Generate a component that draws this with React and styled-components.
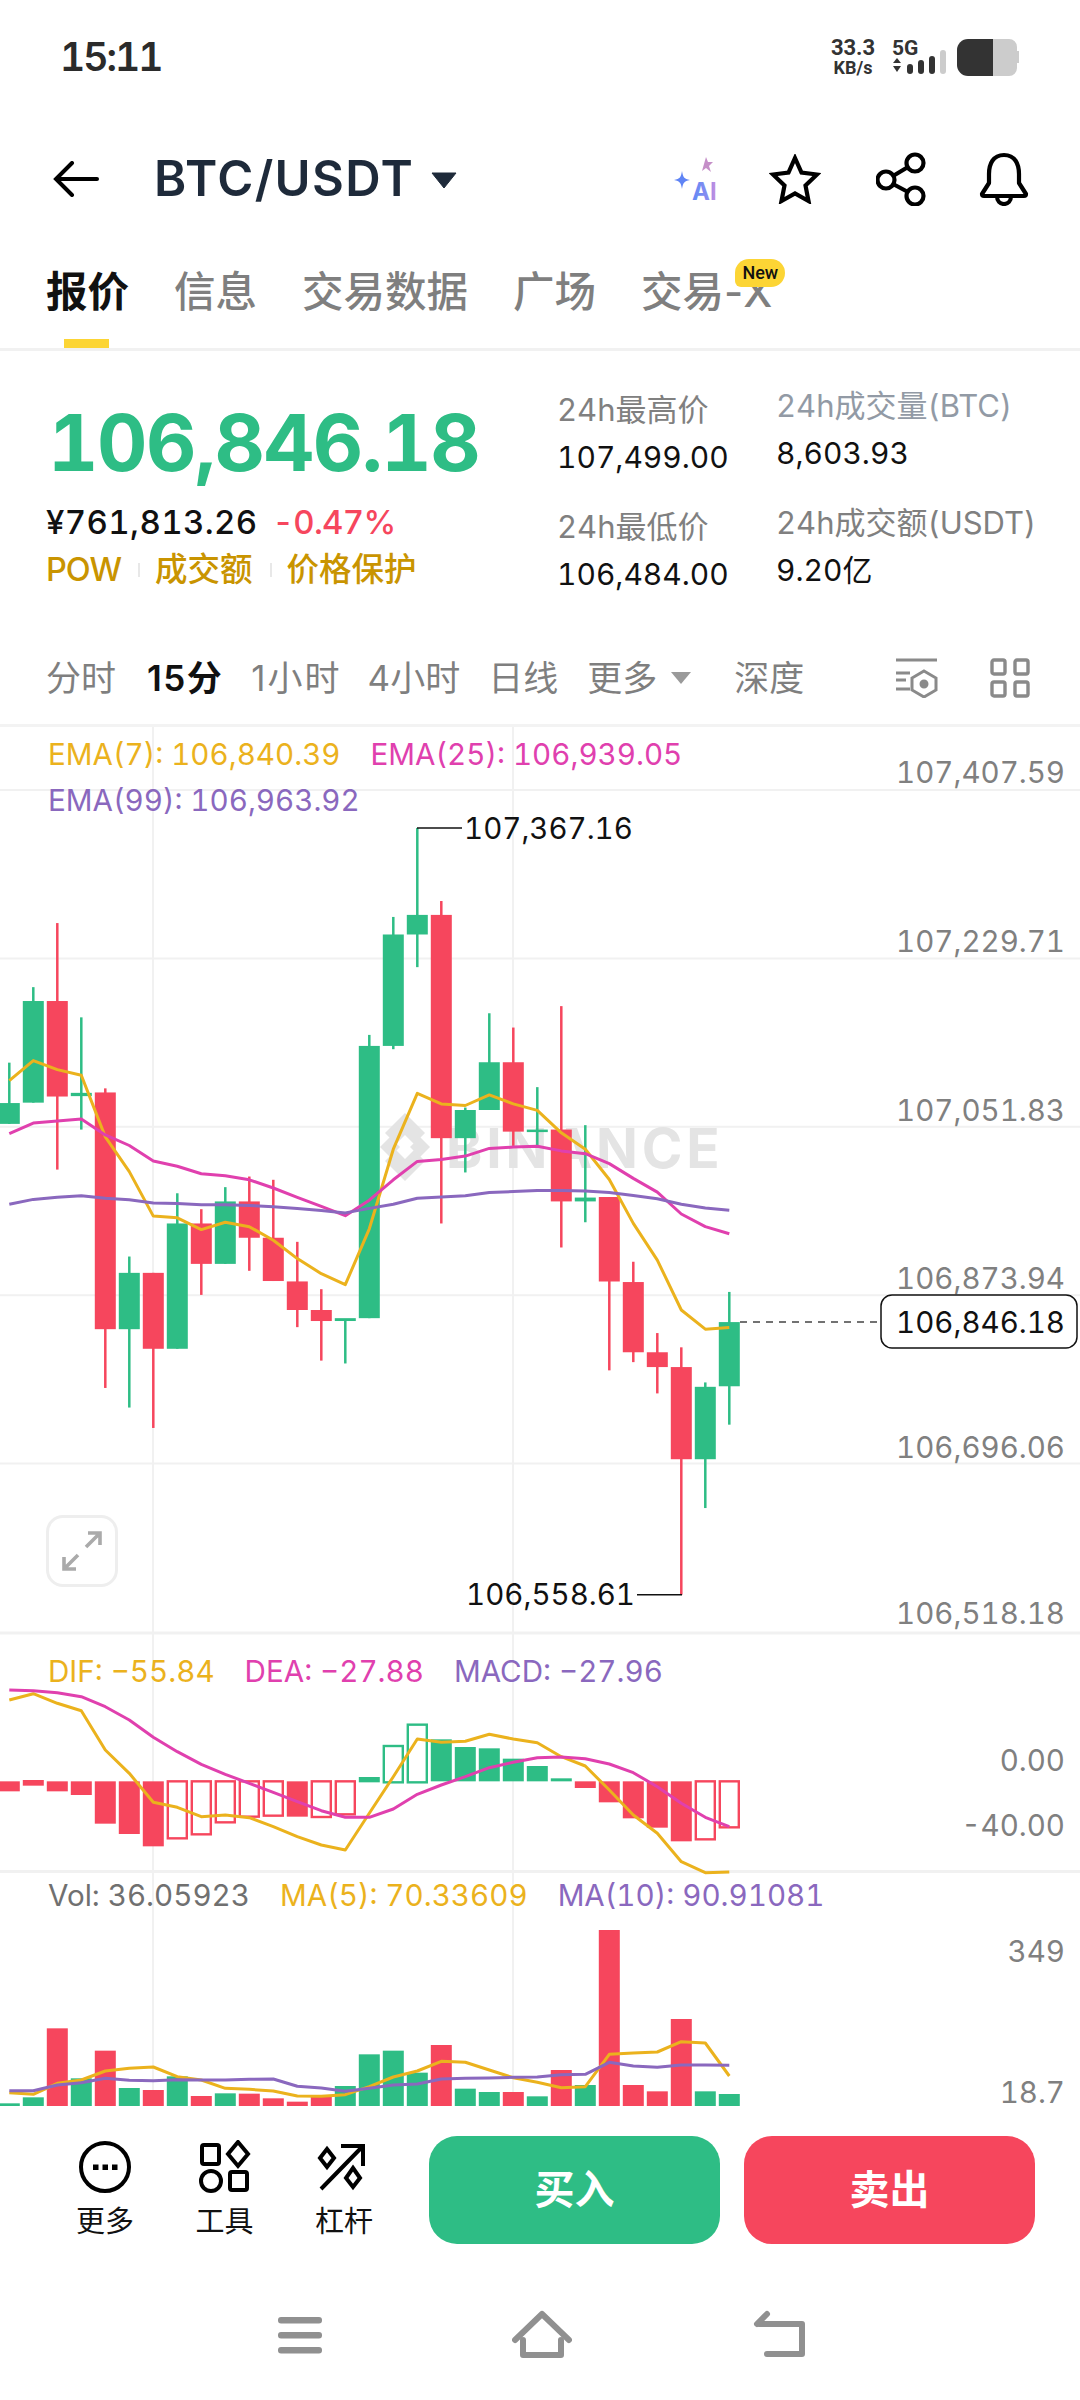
import React from "react";
import styled, { createGlobalStyle } from "styled-components";

const GREEN = "#2EBD85";
const RED = "#F6465D";
const YELLOW = "#EBB21D";
const PINK = "#E040AE";
const PURPLE = "#8A68BE";
const FONT = `Inter, "Noto Sans CJK SC", sans-serif`;

const Global = createGlobalStyle`
  html, body { margin: 0; padding: 0; background: #fff; }
  body { font-family: ${FONT}; }
`;

const Page = styled.div`
  width: 1080px;
  height: 2400px;
  display: flex;
  flex-direction: column;
  background: #fff;
  overflow: hidden;
`;

/* status bar */
const StatusBar = styled.div`
  height: 114px;
  flex: none;
  display: flex;
  justify-content: space-between;
  padding: 37px 61px 0 60px;
  box-sizing: border-box;
`;
const Clock = styled.div`
  font: 600 39px/40px ${FONT};
  font-variant-numeric: tabular-nums;
  color: #2b2b2b;
  letter-spacing: -2px;
`;
const StatusRight = styled.div`
  display: flex;
  align-items: flex-start;
  height: 40px;
`;
const NetSpeed = styled.div`
  font: 700 22px/20px Roboto, sans-serif;
  color: #333;
  width: 60px;
  text-align: center;
  margin-top: 1px;
  small { display: block; font: 700 18px/20px Roboto, sans-serif; }
`;
const NetType = styled.div`
  position: relative;
  width: 66px;
  margin-left: 8px;
  font: 700 21px/20px Roboto, sans-serif;
  color: #333;
  margin-top: 1px;
  padding-left: 1px;
  box-sizing: border-box;
`;
const SignalBars = styled.svg`
  position: absolute;
  left: 0;
  top: 0;
`;

/* header */
const Header = styled.div`
  height: 122px;
  flex: none;
  display: flex;
  align-items: center;
  padding: 8px 50px 0 53px;
  box-sizing: border-box;
`;
const Pair = styled.div`
  font: 600 49px/60px ${FONT};
  color: #1e2a3a;
  margin-left: 55px;
  letter-spacing: 1.4px;
`;
const PairCaret = styled.svg`
  margin-left: 17px;
  margin-top: 2px;
`;
const HeaderIcons = styled.div`
  margin-left: auto;
  display: flex;
  align-items: center;
  gap: 50px;
`;

/* tabs */
const Tabs = styled.div`
  height: 115px;
  flex: none;
  display: flex;
  gap: 45px;
  padding-left: 46px;
  box-sizing: border-box;
  border-bottom: 3px solid #f1f1f1;
`;
const Tab = styled.div`
  position: relative;
  margin-top: 32px;
  font: ${(p) => (p.$on ? 700 : 500)} 41.5px/48px ${FONT};
  color: ${(p) => (p.$on ? "#111" : "#7f7f7f")};
  height: 80px;
  &::after {
    content: "";
    display: ${(p) => (p.$on ? "block" : "none")};
    position: absolute;
    left: 18px;
    width: 45px;
    height: 9px;
    bottom: 0;
    background: #fcd535;
  }
`;
const NewBadge = styled.span`
  position: absolute;
  right: -13px;
  top: -9px;
  width: 50px;
  height: 28px;
  border-radius: 14px 14px 14px 6px;
  background: #fcd535;
  color: #111;
  font: 500 18px/28px Roboto, sans-serif;
  text-align: center;
`;

/* summary */
const Summary = styled.div`
  height: 261px;
  flex: none;
  display: flex;
  padding-left: 46px;
  box-sizing: border-box;
`;
const PriceCol = styled.div`
  width: 511px;
  flex: none;
`;
const BigPrice = styled.div`
  margin: 46px 0 0 2px;
  font: 700 78px/92px ${FONT};
  font-variant-numeric: tabular-nums;
  letter-spacing: -1.4px;
  color: ${GREEN};
`;
const SubRow = styled.div`
  display: flex;
  align-items: baseline;
  gap: 15px;
  margin-top: 13px;
  font: 500 33px/40px ${FONT};
  font-variant-numeric: tabular-nums;
  color: #111;
`;
const Cny = styled.span`
  letter-spacing: 0.4px;
`;
const Change = styled.span`
  color: ${RED};
  letter-spacing: -0.7px;
`;
const TagRow = styled.div`
  display: flex;
  align-items: center;
  margin-top: 8px;
`;
const TagItem = styled.span`
  font: 500 32.5px/40px ${FONT};
  letter-spacing: ${(p) => p.$ls || 0}px;
  color: #c99400;
  & + & {
    margin-left: 17px;
    padding-left: 17px;
    background: linear-gradient(#e8e8e8, #e8e8e8) left center / 2px 14px no-repeat;
  }
`;
const StatCol = styled.div`
  flex: none;
  width: ${(p) => p.$w}px;
  padding-top: ${(p) => p.$top}px;
`;
const StatLabel = styled.div`
  font: 400 31px/36px ${FONT};
  font-variant-numeric: tabular-nums;
  color: ${(p) => p.$c || "#808080"};
`;
const StatValue = styled.div`
  font: 400 30px/38px ${FONT};
  font-variant-numeric: tabular-nums;
  color: #111;
  margin-top: 10px;
  margin-bottom: 33px;
`;

/* intervals */
const Intervals = styled.div`
  height: 115px;
  flex: none;
  display: flex;
  align-items: center;
  padding: 20px 50px 0 46px;
  box-sizing: border-box;
  border-bottom: 3px solid #f3f3f3;
  position: relative;
`;
const Interval = styled.span`
  font: ${(p) => (p.$on ? 600 : 400)} 35px/44px ${FONT};
  letter-spacing: ${(p) => p.$ls || 0}px;
  color: ${(p) => (p.$on ? "#111" : "#7f7f7f")};
  margin-right: ${(p) => p.$gap}px;
`;
const IntervalCaret = styled.svg`
  margin-right: 42px;
`;
const IntervalIcons = styled.div`
  margin-left: auto;
  display: flex;
  gap: 52px;
`;

/* chart */
const Panel = styled.div`
  position: relative;
  flex: none;
  height: ${(p) => p.$h}px;
`;
const ChartSvg = styled.svg`
  display: block;
  position: absolute;
  inset: 0;
  overflow: visible;
`;
const Axis = styled.text`
  font: 400 29.5px ${FONT};
  font-variant-numeric: tabular-nums;
  fill: #808080;
  text-anchor: end;
`;
const Extreme = styled.text`
  font: 400 29.5px ${FONT};
  font-variant-numeric: tabular-nums;
  fill: #111;
  text-anchor: ${(p) => p.$anchor || "start"};
`;
const Watermark = styled.text`
  font: 700 55px ${FONT};
  fill: #e4e4e4;
  letter-spacing: 3.8px;
`;
const Legend = styled.div`
  position: absolute;
  left: ${(p) => p.$left || 48}px;
  top: ${(p) => p.$top}px;
  width: ${(p) => p.$w || 700}px;
  display: flex;
  flex-wrap: wrap;
  column-gap: 30px;
  row-gap: 10px;
  font: 400 29.6px/36px ${FONT};
  font-variant-numeric: tabular-nums;
  white-space: nowrap;
`;
const LegendItem = styled.span`
  color: ${(p) => p.$c};
`;
const ExpandBtn = styled.div`
  position: absolute;
  left: 46px;
  top: 788px;
  width: 72px;
  height: 72px;
  box-sizing: border-box;
  border: 3px solid #eeeeee;
  border-radius: 17px;
  display: flex;
  align-items: center;
  justify-content: center;
  background: #fff;
`;

/* footer */
const Footer = styled.div`
  height: 164px;
  flex: none;
  display: flex;
  align-items: flex-start;
  padding-top: 30px;
  box-sizing: border-box;
`;
const Tools = styled.div`
  width: 429px;
  flex: none;
  display: flex;
  padding: 4px 0 0 66px;
  box-sizing: border-box;
`;
const Tool = styled.div`
  width: 119.5px;
  display: flex;
  flex-direction: column;
  align-items: flex-start;
`;
const ToolIcon = styled.svg`
  display: block;
  margin-left: ${(p) => p.$ml || 0}px;
`;
const ToolText = styled.span`
  font: 400 29px/34px ${FONT};
  color: #111;
  margin: 11px 0 0 10px;
`;
const TradeBtn = styled.div`
  width: 291px;
  height: 108px;
  flex: none;
  border-radius: 28px;
  background: ${(p) => p.$c};
  color: #fff;
  font: 700 40px/108px ${FONT};
  text-align: center;
  margin-right: ${(p) => p.$mr || 0}px;
`;

/* nav */
const NavBar = styled.div`
  flex: 1;
  display: flex;
  align-items: flex-start;
  padding: 40px 0 0 272px;
  gap: 184px;
`;

/* ---- data ---- */
const cx = (i) => 9.3 + 24 * i;
const y3 = (v) => 790 + v / 2.45;
const y5 = (v) => 790 + v / 1.823;

const candles3 = [
  ["g", 767, 818, 668, 818],
  ["g", 517, 766, 483, 766],
  ["r", 517, 751, 326, 930],
  ["g", 742, 750, 557, 832],
  ["r", 741, 1321, 731, 1465],
  ["g", 1183, 1321, 1143, 1513],
  ["r", 1183, 1369, 1183, 1563],
  ["g", 1062, 1369, 988, 1369],
  ["r", 1062, 1161, 1027, 1237],
  ["g", 1008, 1161, 973, 1161],
  ["r", 1008, 1097, 947, 1178],
  ["r", 1097, 1203, 955, 1203],
  ["r", 1204, 1274, 1107, 1316],
  ["r", 1274, 1301, 1223, 1398],
  ["g", 1294, 1301, 1297, 1405],
  ["g", 627, 1294, 600, 1294],
  ["g", 354, 627, 311, 635],
  ["g", 306, 354, 93, 434],
  ["r", 306, 853, 272, 1062],
  ["g", 784, 853, 778, 937],
  ["g", 667, 784, 547, 784],
  ["r", 667, 837, 582, 872],
  ["g", 832, 836, 728, 872],
].map(([c, a, b, d, e]) => [c, y3(a), y3(b), y3(d), y3(e)]);
const candles5 = [
  ["r", 619, 750, 394, 834],
  ["g", 743, 750, 611, 788],
  ["r", 742, 896, 742, 1058],
  ["r", 897, 1025, 860, 1043],
  ["r", 1025, 1052, 990, 1100],
  ["r", 1052, 1220, 1016, 1467],
  ["g", 1088, 1220, 1080, 1309],
  ["g", 970, 1087, 915, 1157],
].map(([c, a, b, d, e]) => [c, y5(a), y5(b), y5(d), y5(e)]);
const candles = [...candles3, ...candles5];

const mix = (a3, a5) => [...a3.map(y3), ...a5.map(y5)];
const ema7 = mix(
  [712, 663, 685, 699, 850, 935, 1044, 1048, 1077, 1059, 1070, 1103, 1148, 1185, 1212, 1075, 880, 743, 769, 773, 747, 769, 785],
  [625, 655, 710, 790, 857, 948, 983, 980]
);
const ema25 = mix(
  [842, 816, 811, 806, 845, 871, 909, 922, 940, 945, 955, 975, 998, 1020, 1043, 1005, 955, 910, 905, 897, 878, 875, 873],
  [658, 663, 681, 708, 733, 773, 796, 809]
);
const ema99 = mix(
  [1015, 1003, 998, 994, 1000, 1004, 1012, 1013, 1016, 1016, 1018, 1021, 1025, 1030, 1036, 1025, 1015, 1000, 997, 994, 986, 984, 981],
  [730, 731, 734, 739, 745, 755, 762, 766]
);

const pts = (arr, f = (v) => v) => arr.map((v, i) => `${cx(i).toFixed(1)},${f(v).toFixed(1)}`).join(" ");

const macdBars = [
  ["r", 0, 484, 514], ["r", 0, 480, 497], ["r", 0, 484, 514], ["r", 0, 484, 525], ["r", 0, 484, 611],
  ["r", 0, 484, 642], ["r", 0, 484, 679], ["r", 1, 484, 655], ["r", 1, 484, 643], ["r", 1, 484, 607],
  ["r", 1, 484, 590], ["r", 1, 484, 587], ["r", 0, 484, 590], ["r", 1, 484, 591], ["r", 1, 484, 583],
  ["g", 0, 471, 487], ["g", 1, 378, 487], ["g", 1, 314, 487], ["g", 0, 358, 484], ["g", 0, 381, 484],
  ["g", 0, 385, 484], ["g", 0, 416, 484], ["g", 0, 438, 484], ["g", 0, 475, 484], ["r", 0, 484, 504],
  ["r", 0, 484, 547], ["r", 0, 484, 595], ["r", 0, 484, 623], ["r", 0, 484, 664], ["r", 1, 484, 658],
  ["r", 1, 484, 622],
];
const yM = (v) => 1620 + v / 3;
const dif = [240, 221, 250, 272, 390, 460, 547, 562, 590, 585, 593, 620, 650, 675, 690, 580, 470, 357, 367, 364, 343, 357, 368, 410, 438, 510, 585, 640, 725, 758, 756];
const dea = [210, 212, 218, 230, 260, 300, 352, 395, 433, 463, 490, 517, 545, 572, 592, 592, 567, 523, 495, 470, 443, 427, 413, 411, 416, 432, 458, 500, 550, 592, 620];

const yV = (v) => 1870 + v / 3;
const volBars = [
  ["g", 700], ["g", 682], ["r", 475], ["g", 625], ["r", 542], ["g", 654], ["r", 660], ["g", 619],
  ["r", 678], ["g", 670], ["r", 671], ["r", 685], ["r", 695], ["r", 680], ["g", 648], ["g", 553],
  ["g", 542], ["g", 608], ["r", 525], ["g", 656], ["g", 666], ["r", 666], ["g", 679], ["r", 600],
  ["g", 645], ["r", 180], ["r", 645], ["r", 664], ["r", 447], ["g", 664], ["g", 672],
];
const ma5 = [668, 673, 640, 630, 603, 595, 591, 620, 630, 655, 658, 663, 678, 679, 674, 650, 621, 603, 574, 577, 600, 623, 637, 653, 650, 553, 549, 546, 515, 519, 618];
const ma10 = [662, 662, 645, 638, 625, 631, 632, 629, 630, 630, 628, 627, 649, 654, 664, 655, 645, 642, 627, 625, 624, 622, 621, 614, 613, 577, 588, 592, 585, 585, 586];

const col = (c) => (c === "g" ? GREEN : RED);

const Line = ({ data, f, color, w = 3 }) => (
  <polyline points={pts(data, f)} fill="none" stroke={color} strokeWidth={w} strokeLinejoin="round" />
);

const VGrid = ({ top, bottom }) => (
  <>
    <line x1="153" x2="153" y1={top} y2={bottom} stroke="#f1f1f1" strokeWidth="2" />
    <line x1="513" x2="513" y1={top} y2={bottom} stroke="#f1f1f1" strokeWidth="2" />
  </>
);

const PriceChart = () => (
  <Panel $h={905}>
    <ChartSvg width="1080" height="905" viewBox="0 727 1080 905">
      <VGrid top={727} bottom={1632} />
      {[790, 958.4, 1126.8, 1295.2, 1463.6].map((y) => (
        <line key={y} x1="0" x2="1080" y1={y} y2={y} stroke="#f1f1f1" strokeWidth="2" />
      ))}
      <g fill="#e4e4e4">
        <polygon points="405,1113 425,1133 414,1144 405,1135 396,1144 385,1133" />
        <polygon points="380,1147 390,1137 400,1147 390,1157" />
        <polygon points="410,1147 420,1137 430,1147 420,1157" />
        <polygon points="405,1181 385,1161 396,1150 405,1159 414,1150 425,1161" />
      </g>
      <Watermark x="446" y="1168">BINANCE</Watermark>
      {candles.map(([c, a, b, d, e], i) => (
        <g key={i} fill={col(c)}>
          <rect x={cx(i) - 1.25} y={d} width="2.5" height={e - d} />
          <rect x={cx(i) - 10.5} y={a} width="21" height={Math.max(b - a, 2.5)} />
        </g>
      ))}
      <Line data={ema7} color={YELLOW} />
      <Line data={ema25} color={PINK} />
      <Line data={ema99} color={PURPLE} />
      <path d="M417 828H462" stroke="#111" strokeWidth="1.5" />
      <path d="M637 1594.7H682" stroke="#111" strokeWidth="1.5" />
      <path d="M740 1322H880" stroke="#444" strokeWidth="1.5" strokeDasharray="7 6" />
      <Extreme x="464" y="839">107,367.16</Extreme>
      <Extreme x="635" y="1605" $anchor="end">106,558.61</Extreme>
      <Axis x="1065" y="783">107,407.59</Axis>
      <Axis x="1065" y="952">107,229.71</Axis>
      <Axis x="1065" y="1121">107,051.83</Axis>
      <Axis x="1065" y="1289">106,873.94</Axis>
      <Axis x="1065" y="1458">106,696.06</Axis>
      <Axis x="1065" y="1624">106,518.18</Axis>
      <rect x="881" y="1295" width="196" height="53" rx="11" fill="#fff" stroke="#111" strokeWidth="1.5" />
      <Extreme x="1065" y="1333" $anchor="end">106,846.18</Extreme>
    </ChartSvg>
    <Legend $top={9}>
      <LegendItem $c={YELLOW}>EMA(7): 106,840.39</LegendItem>
      <LegendItem $c={PINK}>EMA(25): 106,939.05</LegendItem>
      <LegendItem $c={PURPLE}>EMA(99): 106,963.92</LegendItem>
    </Legend>
    <ExpandBtn>
      <svg width="46" height="46" viewBox="0 0 46 46" fill="none" stroke="#aaa" strokeWidth="3.6">
        <path d="M27 19L41 5M29 5H41V17" />
        <path d="M19 27L5 41M17 41H5V29" />
      </svg>
    </ExpandBtn>
  </Panel>
);

const MacdChart = () => (
  <Panel $h={240}>
    <ChartSvg width="1080" height="240" viewBox="0 1632 1080 240">
      <VGrid top={1632} bottom={1872} />
      <path d="M0 1633H1080M0 1871.5H1080" stroke="#f1f1f1" strokeWidth="3" />
      {macdBars.map(([c, hollow, a, b], i) =>
        hollow ? (
          <rect key={i} x={cx(i) - 9.5} y={yM(a)} width="19" height={yM(b) - yM(a)} fill="none" stroke={col(c)} strokeWidth="2.4" />
        ) : (
          <rect key={i} x={cx(i) - 10.5} y={yM(a)} width="21" height={yM(b) - yM(a)} fill={col(c)} />
        )
      )}
      <Line data={dif} f={yM} color={YELLOW} />
      <Line data={dea} f={yM} color={PINK} />
      <Axis x="1065" y="1771">0.00</Axis>
      <Axis x="1065" y="1836">-40.00</Axis>
    </ChartSvg>
    <Legend $top={21} $left={48} $w={900}>
      <LegendItem $c={YELLOW}>DIF: −55.84</LegendItem>
      <LegendItem $c={PINK}>DEA: −27.88</LegendItem>
      <LegendItem $c={PURPLE}>MACD: −27.96</LegendItem>
    </Legend>
  </Panel>
);

const VolChart = () => (
  <Panel $h={234}>
    <ChartSvg width="1080" height="234" viewBox="0 1872 1080 234">
      <VGrid top={1872} bottom={2106} />
      {volBars.map(([c, t], i) => (
        <rect key={i} x={cx(i) - 10.5} y={yV(t)} width="21" height={2106 - yV(t)} fill={col(c)} />
      ))}
      <Line data={ma5} f={yV} color={YELLOW} />
      <Line data={ma10} f={yV} color={PURPLE} />
      <Axis x="1065" y="1962">349</Axis>
      <Axis x="1065" y="2103">18.7</Axis>
    </ChartSvg>
    <Legend $top={5} $left={48} $w={900}>
      <LegendItem $c="#707070">Vol: 36.05923</LegendItem>
      <LegendItem $c={YELLOW}>MA(5): 70.33609</LegendItem>
      <LegendItem $c={PURPLE}>MA(10): 90.91081</LegendItem>
    </Legend>
  </Panel>
);

const IconPlain = ({ children, w, h }) => (
  <svg width={w} height={h} viewBox={`0 0 ${w} ${h}`} fill="none" stroke="#000" strokeWidth="4.2">
    {children}
  </svg>
);

export default function App() {
  return (
    <Page>
      <Global />
      <StatusBar>
        <Clock>15:11</Clock>
        <StatusRight>
          <NetSpeed>
            33.3
            <small>KB/s</small>
          </NetSpeed>
          <NetType>
            5G
            <SignalBars width="58" height="38" viewBox="0 0 58 38" fill="#333">
              <polygon points="2,25 6,20 10,25" />
              <polygon points="2,28 10,28 6,34" />
              <rect x="16" y="26" width="6" height="10" rx="3" />
              <rect x="27" y="22" width="6" height="14" rx="3" />
              <rect x="38" y="18" width="6" height="18" rx="3" />
              <rect x="49" y="12" width="6" height="24" rx="3" fill="#ccc" />
            </SignalBars>
          </NetType>
          <svg width="62" height="37" viewBox="0 0 62 37" style={{ marginTop: 2 }}>
            <path d="M11 0H36V37H11A11 11 0 0 1 0 26V11A11 11 0 0 1 11 0Z" fill="#333" />
            <path d="M36 0H52A8 8 0 0 1 60 8V12H62V24H60V29A8 8 0 0 1 52 37H36Z" fill="#ccc" />
          </svg>
        </StatusRight>
      </StatusBar>

      <Header>
        <svg width="46" height="36" viewBox="0 0 46 36" fill="none" stroke="#000" strokeWidth="4" strokeLinecap="round">
          <path d="M44 18H4" />
          <path d="M19 2L3 18L19 34" />
        </svg>
        <Pair>BTC/USDT</Pair>
        <PairCaret width="26" height="17" viewBox="0 0 26 17">
          <path d="M1 1H25L13 16Z" fill="#1e2a3a" stroke="#1e2a3a" strokeLinejoin="round" />
        </PairCaret>
        <HeaderIcons>
          <svg width="46" height="54" viewBox="0 0 46 54" style={{ marginTop: 8, overflow: "visible" }}>
            <defs>
              <linearGradient id="aiG" x1="0" x2="1" y1="0" y2="0">
                <stop offset="0" stopColor="#5f8af5" />
                <stop offset="0.7" stopColor="#8d8cf0" />
                <stop offset="1" stopColor="#d48fd8" />
              </linearGradient>
            </defs>
            <path d="M9 15 C10 21 11 23 17 24 C11 25 10 27 9 33 C8 27 7 25 1 24 C7 23 8 21 9 15Z" fill="#5f84f5" />
            <path d="M33 1L35 6L40 6L36 10L38 16L33 12L29 15Z" fill="#c58fc8" />
            <text x="19" y="44" fontFamily="Inter" fontWeight="700" fontSize="24" fill="url(#aiG)">AI</text>
          </svg>
          <svg width="52" height="50" viewBox="0 0 52 50" style={{ marginRight: 5 }}>
            <path d="M26 4L32.5 18.5L48 20.5L36.5 31.5L39.5 47L26 39.5L12.5 47L15.5 31.5L4 20.5L19.5 18.5Z" fill="none" stroke="#000" strokeWidth="4.2" strokeLinejoin="miter" />
          </svg>
          <IconPlain w={52} h={54}>
            <circle cx="39" cy="11" r="8.5" />
            <circle cx="10" cy="28" r="8.5" />
            <circle cx="39" cy="44" r="8.5" />
            <path d="M32 15L17 24M17 32L32 40" />
          </IconPlain>
          <IconPlain w={52} h={54}>
            <path d="M26 3C15 3 11 12 11 22V31L4 42C4 44 5 44 6 44H46C47 44 48 44 48 42L41 31V22C41 12 37 3 26 3Z" strokeLinejoin="round" />
            <path d="M19 44C19 49 22 52 26 52C30 52 33 49 33 44" />
          </IconPlain>
        </HeaderIcons>
      </Header>

      <Tabs>
        <Tab $on>报价</Tab>
        <Tab>信息</Tab>
        <Tab>交易数据</Tab>
        <Tab>广场</Tab>
        <Tab>
          交易-X
          <NewBadge>New</NewBadge>
        </Tab>
      </Tabs>

      <Summary>
        <PriceCol>
          <BigPrice>106,846.18</BigPrice>
          <SubRow>
            <Cny>¥761,813.26</Cny>
            <Change>-0.47%</Change>
          </SubRow>
          <TagRow>
            <TagItem $ls={-1}>POW</TagItem>
            <TagItem>成交额</TagItem>
            <TagItem>价格保护</TagItem>
          </TagRow>
        </PriceCol>
        <StatCol $w={219} $top={41}>
          <StatLabel>24h最高价</StatLabel>
          <StatValue>107,499.00</StatValue>
          <StatLabel>24h最低价</StatLabel>
          <StatValue>106,484.00</StatValue>
        </StatCol>
        <StatCol $w={300} $top={37}>
          <StatLabel $c="#929aa5">24h成交量(BTC)</StatLabel>
          <StatValue>8,603.93</StatValue>
          <StatLabel>24h成交额(USDT)</StatLabel>
          <StatValue>9.20亿</StatValue>
        </StatCol>
      </Summary>

      <Intervals>
        <Interval $gap={31}>分时</Interval>
        <Interval $gap={28} $ls={1.5} $on>15分</Interval>
        <Interval $gap={26} $ls={2}>1小时</Interval>
        <Interval $gap={28}>4小时</Interval>
        <Interval $gap={29}>日线</Interval>
        <Interval $gap={13}>更多</Interval>
        <IntervalCaret width="22" height="14" viewBox="0 0 22 14">
          <path d="M1 1H21L11 13Z" fill="#9a9a9a" />
        </IntervalCaret>
        <Interval $gap={0}>深度</Interval>
        <IntervalIcons>
          <svg width="42" height="40" viewBox="0 0 42 40" fill="none" stroke="#8a8a8a" strokeWidth="3">
            <path d="M0 2H41M0 15H14M0 22H10M0 31H14" />
            <path d="M28 13L40 20V32L28 39L16 32V20Z" />
            <circle cx="28" cy="26" r="3" fill="#8a8a8a" />
          </svg>
          <svg width="40" height="40" viewBox="0 0 40 40" fill="none" stroke="#8a8a8a" strokeWidth="3.4">
            <rect x="2" y="2" width="13" height="14" rx="2" />
            <rect x="25" y="2" width="13" height="14" rx="2" />
            <rect x="2" y="24" width="13" height="14" rx="2" />
            <rect x="25" y="24" width="13" height="14" rx="2" />
          </svg>
        </IntervalIcons>
      </Intervals>

      <PriceChart />
      <MacdChart />
      <VolChart />

      <Footer>
        <Tools>
          <Tool>
            <ToolIcon width="54" height="54" viewBox="0 0 54 54" $ml={12}>
              <circle cx="27" cy="27" r="24" fill="none" stroke="#000" strokeWidth="4" />
              <rect x="15" y="24.5" width="5.5" height="5.5" />
              <rect x="24.5" y="24.5" width="5.5" height="5.5" />
              <rect x="34" y="24.5" width="5.5" height="5.5" />
            </ToolIcon>
            <ToolText>更多</ToolText>
          </Tool>
          <Tool>
            <ToolIcon width="54" height="54" viewBox="0 0 54 54" fill="none" stroke="#000" strokeWidth="4" $ml={12}>
              <rect x="4" y="5" width="17" height="19" rx="2" />
              <path d="M40 2L50 14L40 26L30 14Z" />
              <circle cx="13" cy="41" r="10" />
              <rect x="32" y="32" width="17" height="18" rx="2" />
            </ToolIcon>
            <ToolText>工具</ToolText>
          </Tool>
          <Tool>
            <ToolIcon width="54" height="54" viewBox="0 0 54 54" fill="none" stroke="#000" strokeWidth="4" $ml={10}>
              <path d="M6 49L48 6M26 6H48V26" />
              <path d="M12 9L19 18L12 27L5 18Z" />
              <path d="M38 28L45 38L38 47L31 38Z" />
            </ToolIcon>
            <ToolText>杠杆</ToolText>
          </Tool>
        </Tools>
        <TradeBtn $c={GREEN} $mr={24}>买入</TradeBtn>
        <TradeBtn $c={RED}>卖出</TradeBtn>
      </Footer>

      <NavBar>
        <svg width="56" height="46" viewBox="0 0 56 46" fill="#909090">
          <rect x="6" y="7" width="44" height="6.5" rx="3" />
          <rect x="6" y="22" width="44" height="6.5" rx="3" />
          <rect x="6" y="37" width="44" height="6.5" rx="3" />
        </svg>
        <svg width="60" height="48" viewBox="0 0 60 48" fill="none" stroke="#909090" strokeWidth="6" strokeLinejoin="round" strokeLinecap="round">
          <path d="M3 30L30 4L57 30" />
          <path d="M11 30V45H49V30" />
        </svg>
        <svg width="54" height="48" viewBox="0 0 54 48" fill="none" stroke="#909090" strokeWidth="6" strokeLinejoin="round" strokeLinecap="round" style={{ marginLeft: -3 }}>
          <path d="M6 14H49V44H14" />
          <path d="M14 4L4 14" />
        </svg>
      </NavBar>
    </Page>
  );
}
